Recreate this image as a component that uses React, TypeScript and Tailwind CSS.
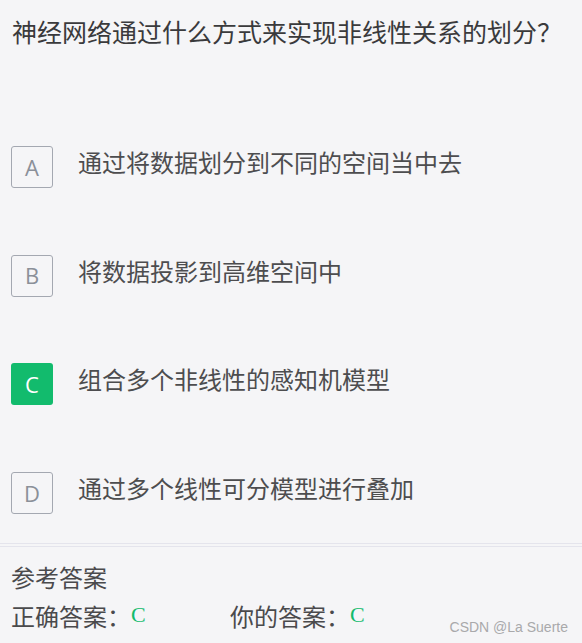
const options = [
  { key: "A", text: "通过将数据划分到不同的空间当中去" },
  { key: "B", text: "将数据投影到高维空间中" },
  { key: "C", text: "组合多个非线性的感知机模型", correct: true },
  { key: "D", text: "通过多个线性可分模型进行叠加" },
];

const cjk = "font-['Microsoft_YaHei','Noto_Sans_CJK_SC',sans-serif]";

export default function App() {
  return (
    <div className={`relative min-h-[643px] w-full overflow-hidden bg-[#f5f5f7] ${cjk}`}>
      <h1 className="px-3 pt-[15px] text-[25px] font-normal leading-8 text-[#3a3a3c] whitespace-nowrap">
        神经网络通过什么方式来实现非线性关系的划分？
      </h1>

      <div className="mt-[99px] flex flex-col gap-[66.7px] pl-[11px]">
        {options.map((o) => (
          <div key={o.key} className="flex items-start gap-[25px]">
            <div
              className={
                o.correct
                  ? "flex h-[42px] w-[42px] shrink-0 items-center justify-center rounded-[3px] bg-[#12bb6d] font-['Open_Sans',sans-serif] text-[22px] text-white"
                  : "flex h-[42px] w-[42px] shrink-0 items-center justify-center rounded-[3px] border border-[#a4a8b1] font-['Open_Sans',sans-serif] text-[22px] text-[#8b9099]"
              }
            >
              {o.key}
            </div>
            <div className="text-[24px] leading-8 text-[#4d4d4f]">{o.text}</div>
          </div>
        ))}
      </div>

      <div className="mt-[29px] h-[4px] border-y border-[#e4e4ec]" />

      <div className="pl-[11px] pt-[11px] text-[24px] leading-[38px] text-[#4a4a4c]">
        <div>参考答案</div>
        <div className="flex">
          <div className="w-[219px]">
            正确答案：
            <span className="align-[4px] font-['Liberation_Serif',serif] text-[22px] text-[#12bb6d]">C</span>
          </div>
          <div>
            你的答案：
            <span className="align-[4px] font-['Liberation_Serif',serif] text-[22px] text-[#12bb6d]">C</span>
          </div>
        </div>
      </div>

      <div className="absolute right-[14px] top-[619px] font-['Liberation_Sans',sans-serif] text-[14px] leading-4 text-[#a9a9ab]">
        CSDN @La Suerte
      </div>
    </div>
  );
}
